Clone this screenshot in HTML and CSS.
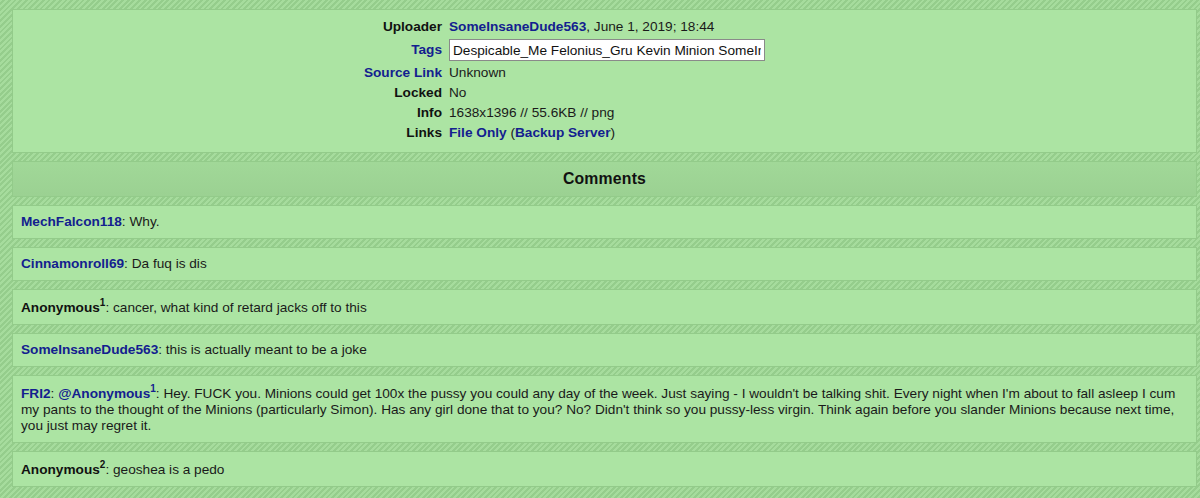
FILE: index.html
```html
<!DOCTYPE html>
<html>
<head>
<meta charset="utf-8">
<link rel="stylesheet" href="styles.css">
</head>
<body>
<div class="page">
  <section class="box info-box">
    <div class="info-grid">
      <div class="label">Uploader</div>
      <div class="value"><a class="name" href="#">SomeInsaneDude563</a>, June 1, 2019; 18:44</div>
      <div class="label"><a class="name" href="#">Tags</a></div>
      <div class="value"><input class="tags" type="text" value="Despicable_Me Felonius_Gru Kevin Minion SomeInsaneDude563"></div>
      <div class="label"><a class="name" href="#">Source Link</a></div>
      <div class="value">Unknown</div>
      <div class="label">Locked</div>
      <div class="value">No</div>
      <div class="label">Info</div>
      <div class="value">1638x1396 // 55.6KB // png</div>
      <div class="label">Links</div>
      <div class="value"><a class="name" href="#">File Only</a> (<a class="name" href="#">Backup Server</a>)</div>
    </div>
  </section>
  <section class="box header-box">Comments</section>
  <div class="box comment"><a class="name" href="#">MechFalcon118</a>: Why.</div>
  <div class="box comment"><a class="name" href="#">Cinnamonroll69</a>: Da fuq is dis</div>
  <div class="box comment"><span class="anon">Anonymous<sup>1</sup></span>: cancer, what kind of retard jacks off to this</div>
  <div class="box comment"><a class="name" href="#">SomeInsaneDude563</a>: this is actually meant to be a joke</div>
  <div class="box comment"><a class="name" href="#">FRI2</a>: <a class="name" href="#">@Anonymous<sup>1</sup></a>: Hey. FUCK you. Minions could get 100x the pussy you could any day of the week. Just saying - I wouldn't be talking shit. Every night when I'm about to fall asleep I cum my pants to the thought of the Minions (particularly Simon). Has any girl done that to you? No? Didn't think so you pussy-less virgin. Think again before you slander Minions because next time, you just may regret it.</div>
  <div class="box comment"><span class="anon">Anonymous<sup>2</sup></span>: geoshea is a pedo</div>
</div>
</body>
</html>
```
FILE: styles.css
```css
html, body {
  margin: 0;
  padding: 0;
}
body {
  font-family: "Liberation Sans", Arial, sans-serif;
  font-size: 13.65px;
  line-height: 16px;
  color: #1a1a1a;
  background: repeating-linear-gradient(135deg, #a6dc9d 0 2px, #95cd8c 2px 4px);
  min-height: 498px;
  overflow: hidden;
}
.page {
  display: flex;
  flex-direction: column;
  gap: 8px;
  padding: 9px 3px 20px 12px;
}
.box {
  background: #ace4a3;
  border: 1px solid #93cb8a;
}
.info-box {
  padding: 9px 0 11px 0;
}
.info-grid {
  display: grid;
  grid-template-columns: 120px auto;
  column-gap: 7px;
  row-gap: 4px;
  margin-left: 309px;
  align-items: center;
}
.label {
  text-align: right;
  font-weight: bold;
  color: #111;
}
.value {
  color: #1a1a1a;
}
.name {
  color: #13208f;
  font-weight: bold;
  text-decoration: none;
}
.anon {
  font-weight: bold;
  color: #111;
}
sup {
  font-size: 10px;
  line-height: 10px;
  vertical-align: 6px;
}
.tags {
  box-sizing: border-box;
  width: 316px;
  height: 22px;
  margin: 0;
  padding: 0 3px;
  border: 1px solid #8a8a8a;
  background: #fff;
  font-family: "Liberation Sans", Arial, sans-serif;
  font-size: 13.65px;
  color: #111;
  display: block;
}
.header-box {
  background: linear-gradient(#a1d898, #9bd192);
  text-align: center;
  font-weight: bold;
  font-size: 15.8px;
  line-height: 18px;
  padding: 8px 0;
  color: #111;
  letter-spacing: 0.2px;
}
.comment {
  padding: 8px 8px;
  line-height: 16px;
}
```
